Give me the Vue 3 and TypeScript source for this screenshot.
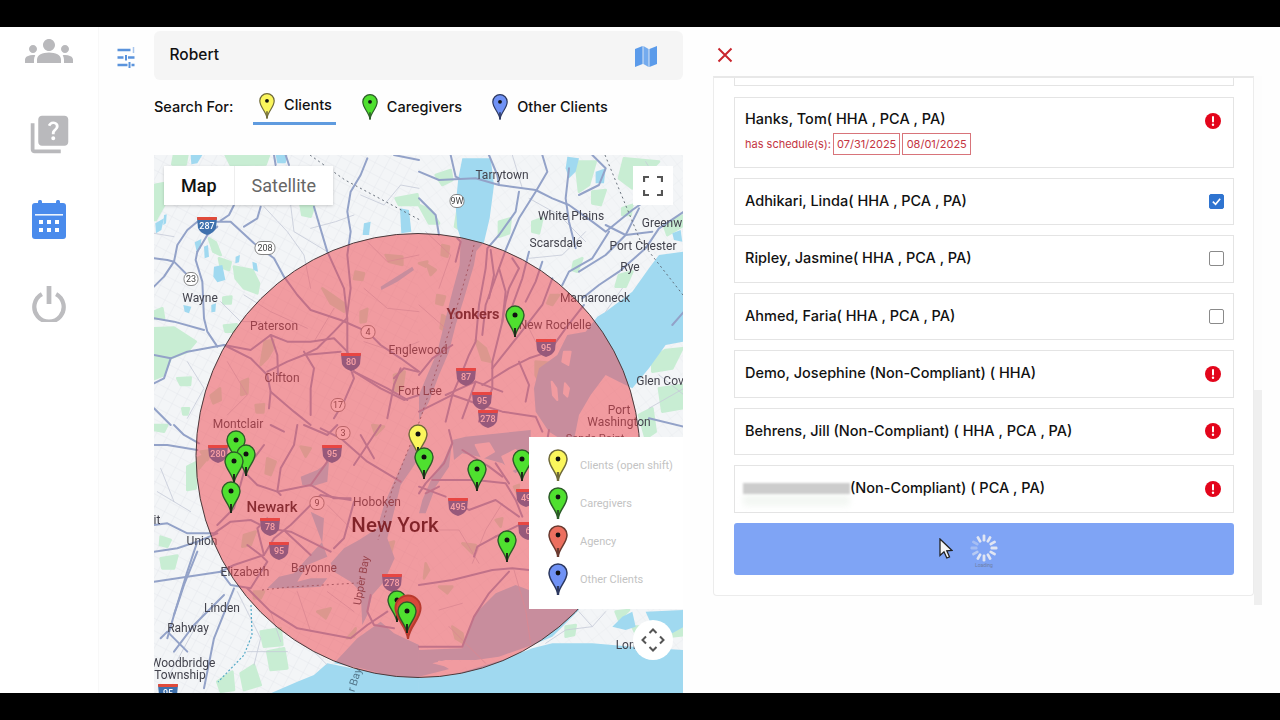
<script setup lang="ts">
interface Label { t: string; x: number; y: number; s?: number; w?: number; c?: string; r?: number }
interface Shield { t: string; x: number; y: number }
interface Pin { x: number; y: number; k: string; s?: number }
interface Quad { x: number; y: number; water: string[]; land: string[]; green: string[]; roads: string[]; thin: string[] }

const pinColors: Record<string, { f: string; s: string }> = {
  y: { f: '#fbf65c', s: '#6f6a3a' },
  g: { f: '#4fe02f', s: '#2c5c28' },
  r: { f: '#ec6f5f', s: '#6a3a30' },
  m: { f: '#d8483a', s: '#b83a2e' },
  b: { f: '#7092f5', s: '#2c3860' },
}
const pinPath = 'M0,22 C-1,13 -9,8 -9,0 A9,9 0 1 1 9,0 C9,8 1,13 0,22 Z'

const tabs = [
  { label: 'Clients', k: 'y', active: true },
  { label: 'Caregivers', k: 'g', active: false },
  { label: 'Other Clients', k: 'b', active: false },
]
const legend = [
  { label: 'Clients (open shift)', k: 'y' },
  { label: 'Caregivers', k: 'g' },
  { label: 'Agency', k: 'r' },
  { label: 'Other Clients', k: 'b' },
]
const pins: Pin[] = [
  { x: 515, y: 315, k: 'g' }, { x: 236, y: 440, k: 'g' }, { x: 246, y: 454, k: 'g' },
  { x: 234, y: 461, k: 'g' }, { x: 231, y: 491, k: 'g' }, { x: 418, y: 434, k: 'y' },
  { x: 424, y: 457, k: 'g' }, { x: 477, y: 469, k: 'g' }, { x: 522, y: 459, k: 'g' },
  { x: 507, y: 540, k: 'g' }, { x: 397, y: 600, k: 'g' }, { x: 408, y: 608, k: 'm', s: 1.4 },
  { x: 407, y: 611, k: 'g' },
]
const labels: Label[] = [
  { t: 'Tarrytown', x: 502, y: 179 }, { t: 'White Plains', x: 571, y: 220 }, { t: 'Scarsdale', x: 556, y: 247 },
  { t: 'Greenw', x: 662, y: 227 }, { t: 'Port Chester', x: 643, y: 250 }, { t: 'Rye', x: 630, y: 271 },
  { t: 'Mamaroneck', x: 595, y: 302 }, { t: 'New Rochelle', x: 555, y: 329 },
  { t: 'Yonkers', x: 473, y: 319, s: 14.5, w: 700, c: '#2a1a20' }, { t: 'Paterson', x: 274, y: 330 },
  { t: 'Wayne', x: 200, y: 302 }, { t: 'Englewood', x: 418, y: 354 }, { t: 'Clifton', x: 282, y: 382 },
  { t: 'Fort Lee', x: 420, y: 395 }, { t: 'Glen Cov', x: 660, y: 385 }, { t: 'Port', x: 619, y: 414 },
  { t: 'Washington', x: 619, y: 426 }, { t: 'Montclair', x: 238, y: 428 },
  { t: 'Newark', x: 272, y: 512, s: 15, w: 500, c: '#22161a' }, { t: 'Hoboken', x: 377, y: 506 },
  { t: 'New York', x: 395, y: 532, s: 20.5, w: 500, c: '#140408' }, { t: 'Union', x: 202, y: 545 },
  { t: 'Elizabeth', x: 245, y: 576 }, { t: 'Bayonne', x: 314, y: 572 }, { t: 'Linden', x: 222, y: 612 },
  { t: 'Rahway', x: 188, y: 632 }, { t: 'Woodbridge', x: 183, y: 667 }, { t: 'Township', x: 180, y: 679 },
  { t: 'it', x: 157, y: 524 }, { t: 'Long', x: 629, y: 649 }, { t: 'Sands Point', x: 595, y: 442, s: 11 },
]
const rotated: Label[] = [
  { t: 'Upper Bay', x: 365, y: 581, r: -80, s: 11 },
  { t: 'r Bay', x: 358, y: 681, r: -72, s: 11, c: '#55798c' },
]
const interstates: Shield[] = [
  { t: '287', x: 207, y: 225 }, { t: '280', x: 218, y: 453 }, { t: '95', x: 332, y: 453 },
  { t: '80', x: 351, y: 361 }, { t: '87', x: 466, y: 376 }, { t: '95', x: 482, y: 400 },
  { t: '278', x: 488, y: 418 }, { t: '95', x: 546, y: 347 }, { t: '495', x: 458, y: 506 },
  { t: '78', x: 270, y: 526 }, { t: '95', x: 279, y: 550 }, { t: '278', x: 392, y: 582 },
  { t: '95', x: 168, y: 692 }, { t: '49', x: 526, y: 497 }, { t: '6', x: 528, y: 530 },
]
const routes: Shield[] = [
  { t: '208', x: 265, y: 248 }, { t: '23', x: 191, y: 279 }, { t: '4', x: 368, y: 332 },
  { t: '17', x: 338, y: 405 }, { t: '3', x: 343, y: 433 }, { t: '9W', x: 457, y: 201 }, { t: '9', x: 317, y: 503 },
]
const quads: Quad[] = [
  {
    x: 154, y: 155,
    water: [
      '110,0 145,0 130,25 112,28', '365,0 400,0 395,25 370,25',
      '180,335 205,330 214,375 190,382 178,365', '150,275 162,270 165,305 152,310',
      '122,262 142,252 140,280 128,290', '4,205 30,190 22,225 6,235', '30,180 38,178 36,205 28,210',
      '245,305 258,300 255,322 244,325', '295,320 308,325 312,350 298,345', '88,450 112,455 105,475 92,470',
      '172,450 186,445 184,470 172,472', '738,160 765,165 772,230 742,235', '630,205 650,200 645,240 626,240',
      '680,395 720,370 775,335 780,345 730,380 682,405',
    ],
    land: [],
    green: [
      '0,90 28,85 30,150 5,195 0,195', '240,335 295,345 315,385 310,415 270,400 245,370', '195,310 230,322 225,345 200,335',
      '165,250 185,262 200,300 178,290', '0,520 60,518 125,560 100,590 50,610 30,660 0,672', '70,670 110,668 108,690 80,690',
      '210,512 248,508 240,530 215,530', '215,0 345,0 335,28 230,30', '725,130 790,118 795,150 735,150',
      '0,470 25,460 30,490 0,490', '208,428 232,425 230,445 208,445', '60,0 100,0 95,28 55,28', '440,150 480,155 470,185 445,180',
      '505,400 535,420 570,445 570,470 530,445', '332,560 358,555 355,585 340,610 320,630 325,600',
      '605,350 630,355 625,375 600,372', '262,680 282,672 280,715 262,720', '170,722 198,700 200,735 178,745',
      '620,470 640,462 635,500 620,502', '695,300 745,305 745,330 705,320', '720,660 752,650 745,700 722,712',
      '305,750 330,748 328,772 308,772', '85,760 105,760 100,778 88,778',
    ],
    roads: [
      'M0,395 L30,365 60,320 70,270 100,225 130,200 230,200 300,265 360,310 390,365 430,420 470,465 560,495 640,530 680,570 740,610 795,650',
      'M240,150 L225,180 200,197', 'M320,155 L310,190 270,215', 'M0,310 L40,315 60,320 110,370',
      'M130,290 L125,315 145,380 150,490 160,530 190,575', 'M0,490 L60,500 150,525', 'M130,290 L160,240 190,215',
      'M0,685 L30,670 50,610 100,590 210,570 290,585 350,540 400,560 470,560 540,550 580,590 600,650 680,700 750,735 795,720',
      'M210,570 L290,610 340,660 350,710 345,760', 'M350,540 L370,600 372,660', 'M340,650 L400,620 450,600 560,590',
      'M450,590 L480,640 470,700 470,780', 'M480,155 L520,290 570,400 580,490 580,620 590,640 600,670 570,740 540,790',
      'M640,10 L620,60 590,110 580,170 590,230 580,300 590,400 578,490 540,530 490,580 450,600',
      'M350,710 L420,770 470,810', 'M600,650 L700,700 760,735', 'M0,760 L50,810', 'M740,640 L720,690 700,790',
      'M790,650 L750,640 720,670', 'M360,0 L365,30', 'M395,0 L405,30', 'M720,0 L795,15', 'M0,600 L50,610',
    ],
    thin: [
      'M330,155 L400,230 450,300 470,400', 'M410,150 L420,230 520,290', 'M620,120 L690,150 740,90 795,100',
      'M640,260 L700,320 795,300', 'M200,440 L260,500 320,500', 'M60,120 L110,130 150,90', 'M0,235 L60,245',
      'M630,400 L700,460 795,470', 'M480,560 L540,460', 'M220,620 L280,720 220,780', 'M100,620 L150,700 100,790',
      'M630,560 L720,590 795,560', 'M470,220 L545,200 600,180', 'M270,420 L350,470 460,520',
    ],
  },
  {
    x: 419, y: 155,
    water: [
      '130,10 215,10 225,90 212,190 195,262 172,288 165,330 132,440 110,510 90,590 60,660 30,740 0,795 0,720 25,660 55,590 75,510 100,410 122,330 125,250 115,220 110,150 118,70',
      '795,290 720,300 690,340 640,410 560,470 535,485 500,530 445,540 415,600 360,640 345,700 350,770 390,830 430,855 465,855 480,780 515,720 560,660 600,680 640,700 690,640 740,570 795,560',
      '445,5 480,10 470,50 450,70 440,40', '530,50 560,40 555,85 530,85', '760,235 785,225 790,260 765,255',
    ],
    land: ['398,680 412,700 415,735 402,720', '438,685 450,700 445,725 435,715', '435,590 455,590 448,630 430,620'],
    green: [
      '50,60 95,45 100,75 70,90', '0,150 35,165 60,205 30,205', '115,170 145,190 125,225 108,215', '240,200 275,190 270,235 240,245',
      '470,20 530,20 510,90 480,110', '520,110 560,105 545,150 520,145', '615,10 720,20 640,100 600,70',
      '610,160 640,150 635,180 610,180', '735,210 795,180 795,210 745,240', '600,360 640,350 620,395 590,395',
      '465,320 490,310 475,350 460,345', '700,610 740,585 790,580 760,640 700,650', '720,700 790,690 790,760 730,770', '660,780 700,760 710,830 680,850',
      '340,200 370,190 360,235 340,230', '70,270 90,275 85,305 68,300', '25,330 50,345 35,360', '55,420 78,425 70,450 52,445',
      '70,480 85,490 85,530 65,520', '395,420 420,420 400,450 385,445', '350,620 410,625 395,680 370,700 350,660',
      '170,555 200,580 215,620 190,615', '0,325 25,320 20,335',
    ],
    roads: [
      'M0,50 L60,75 170,70 240,90 350,105 400,130 450,150 520,200 560,230 640,165 690,130', 'M95,0 L110,65 120,70', 'M0,130 L50,180 60,240',
      'M370,0 L385,50 350,110 300,190 260,285 240,340 260,410 250,500', 'M300,110 L290,170 240,240 205,280 200,340 180,450 170,560 150,600 130,650 100,720 80,800',
      'M280,310 L300,340 270,400 260,440 250,500 220,620 220,700 180,800', 'M330,290 L310,370 270,480', 'M370,320 L350,380 320,440',
      'M400,370 L370,450 300,540 260,590 220,640', 'M495,450 L440,520 390,590 330,610 270,640 190,690', 'M450,40 L440,130 450,200 470,280',
      'M570,230 L520,310 450,350 430,390', 'M795,170 L720,220 680,280 600,350 540,390 490,430', 'M660,160 L620,240 560,300 480,350', 'M560,210 L620,240 700,230',
      'M300,620 L330,690 320,740', 'M80,720 L170,680 250,710', 'M0,770 L60,740 100,720 170,745 250,770 350,785 370,830', 'M130,790 L170,680',
      'M520,0 L560,40 540,90 480,120', 'M210,0 L235,60 240,90', 'M110,320 L125,260 115,250', 'M240,340 L200,450 190,540', 'M215,285 L225,360 210,430',
      'M0,660 L40,610 100,570', 'M795,470 L760,510', 'M690,790 L795,815',
    ],
    thin: ['M280,0 L310,100', 'M330,130 L420,180 500,260', 'M500,230 L430,300 330,310', 'M560,470 L610,400', 'M680,20 L730,100', 'M720,660 L795,720', 'M690,760 L795,700', 'M20,230 L95,300 60,400', 'M0,450 L80,520', 'M300,460 L350,560'],
  },
  {
    x: 154, y: 425,
    water: [
      '770,60 795,50 795,100 740,180 720,260 700,340 722,400 690,470 655,510 640,570 625,600 620,500 590,470 540,440 530,415 570,370 615,345 670,310 690,240 720,170',
      '470,260 510,280 505,350 450,410 420,445 375,455 340,490 420,490 500,485 520,460 470,460 430,470 460,420 520,395',
      '440,155 490,135 525,110 520,170 470,185 445,180',
      '540,715 610,640 680,590 720,625 795,660 795,765 700,750 620,730', '520,715 620,735 795,762 795,805 350,805 430,770 480,750',
    ],
    land: [],
    green: [
      '100,125 130,110 125,190 100,195', '20,335 50,345 40,365 18,360', '20,400 70,392 60,430 25,430', '320,620 380,610 385,660 330,665',
      '340,680 390,670 400,730 350,735', '190,770 235,740 240,795 200,800', '260,745 300,720 320,780 270,795', '0,0 40,0 30,20 0,15',
      '130,100 165,85 160,100 135,130', '340,100 365,110 350,150 335,145', '440,65 470,70 455,95', '655,0 690,5 665,30',
      '270,330 305,320 290,360 265,365', '300,500 330,500 320,520 300,520', '490,560 530,550 515,580', '580,640 605,610 600,635', '680,360 720,350 710,385 680,385',
      '140,80 175,75 160,105',
    ],
    roads: [
      'M60,0 L90,30 135,55', 'M0,60 L40,60 130,75', 'M0,300 L40,295 100,325 180,325 230,290 290,285 340,310 410,320 530,380', 'M0,380 L70,370 130,350 190,325',
      'M0,470 L100,455 200,440', 'M200,440 L240,420 330,390 360,340 410,300 500,210 590,225', 'M130,350 L100,440 60,570 40,640', 'M130,380 L90,480 60,570',
      'M20,640 L40,620 100,680', 'M240,490 L180,640 150,790', 'M280,490 L350,560 430,610 590,640 640,600 700,560', 'M270,140 L310,180 370,200 470,180 540,220 590,220',
      'M350,0 L390,20', 'M430,0 L420,60 380,130 370,200 380,210', 'M510,70 L520,110 470,180', 'M500,10 L560,40 640,110 740,170', 'M620,30 L660,100',
      'M680,0 L640,60 600,120', 'M600,230 L570,340 540,370', 'M650,510 L640,560 660,600 720,610', 'M280,360 L320,390 340,410 290,490 230,480 200,440',
      'M330,390 L320,350 310,310 340,280', 'M190,300 L240,250 270,140 330,60', 'M450,0 L520,30 550,0', 'M210,510 L120,600 60,680', 'M395,320 L470,390',
    ],
    thin: ['M250,500 L320,640 300,720', 'M420,640 L480,680 520,720', 'M350,560 L380,650', 'M150,560 L40,760', 'M20,130 L60,230', 'M10,200 L110,260', 'M430,500 L470,620', 'M520,500 L600,560', 'M280,680 L400,680', 'M520,240 L600,320'],
  },
  {
    x: 419, y: 430,
    water: [
      '100,30 140,20 335,0 335,90 290,130 250,100 180,80 130,70 105,90',
      '100,30 75,90 40,140 10,210 0,250 20,250 50,170 90,110',
      '0,660 130,655 170,550 230,490 290,465 330,480 470,495 480,540 400,620 340,645 240,680 170,690 80,690 40,700 100,715 0,740',
      '0,745 100,735 250,690 340,655 400,640 520,640 640,650 795,660 795,790 0,790',
      '580,590 610,560 640,545 650,590 620,600', '680,545 795,540 795,590 760,610 700,590',
    ],
    land: ['170,45 210,40 225,65 190,85', '250,80 290,60 300,110 270,125', '60,695 130,700 170,700 100,720'],
    green: [
      '200,535 235,530 225,565 205,565', '280,575 300,570 295,595 280,595', '160,600 200,600 205,670 170,660', '100,590 130,610 135,640 110,625', '240,600 265,605 255,620',
      '380,555 418,550 405,580 385,585', '20,400 30,420 15,445', '130,340 170,345 160,370', '230,270 250,265 245,290', '285,170 300,165 295,190', '60,470 100,470 85,490',
      '70,770 130,745 100,760', '440,590 470,585 465,615 440,620', '640,590 690,590 690,610 650,610', '590,545 630,540 600,570', '735,600 795,595 795,615 750,620',
      '310,200 330,195 325,220',
    ],
    roads: [
      'M165,380 L175,350 230,320', 'M0,465 L100,450 220,420 280,415 330,420', 'M0,650 L130,650 165,560 210,490 270,425', 'M90,0 L100,40 75,100 20,160 0,190',
      'M40,150 L170,150 260,160 290,210 310,260', 'M100,210 L150,240 230,210 300,260', 'M230,100 L270,160', 'M130,60 L210,110 250,140', 'M0,170 L80,200', 'M20,190 L60,170',
      'M390,0 L385,30', 'M230,320 L310,280',
    ],
    thin: ['M285,420 L320,540 335,640', 'M20,300 L120,300 180,400', 'M250,220 L200,300 160,400', 'M380,640 L440,600 520,590 560,545', 'M480,545 L520,590', 'M60,540 L130,520', 'M90,590 L200,700'],
  },
]
const ticks = Array.from({ length: 12 }, (_, i) => ({
  a: i * 30,
  o: i === 9 || i === 10 ? 0.35 : i === 8 ? 0.5 : 0.85,
}))
const rows = [
  { name: 'Adhikari, Linda( HHA , PCA , PA)', state: 'checked' },
  { name: 'Ripley, Jasmine( HHA , PCA , PA)', state: 'empty' },
  { name: 'Ahmed, Faria( HHA , PCA , PA)', state: 'empty' },
  { name: 'Demo, Josephine (Non-Compliant) ( HHA)', state: 'error' },
  { name: 'Behrens, Jill (Non-Compliant) ( HHA , PCA , PA)', state: 'error' },
]
</script>

<template>
  <div class="screen">
    <div class="bar"></div>
    <div class="content">
      <nav class="rail">
        <svg class="r-people" viewBox="0 0 24 24" width="48" height="48"><path fill="#b9b9bc" d="M12 12.75c1.63 0 3.07.39 4.24.9 1.08.48 1.76 1.56 1.76 2.73V18H6v-1.61c0-1.18.68-2.26 1.76-2.73 1.17-.52 2.61-.91 4.24-.91zM4 13c1.1 0 2-.9 2-2s-.9-2-2-2-2 .9-2 2 .9 2 2 2zm1.13 1.1C4.76 14.04 4.39 14 4 14c-.99 0-1.93.21-2.78.58C.48 14.9 0 15.62 0 16.43V18h4.5v-1.61c0-.83.23-1.61.63-2.29zM20 13c1.1 0 2-.9 2-2s-.9-2-2-2-2 .9-2 2 .9 2 2 2zm4 3.43c0-.81-.48-1.53-1.22-1.85C21.93 14.21 20.99 14 20 14c-.39 0-.76.04-1.13.1.4.68.63 1.46.63 2.29V18H24v-1.57zM12 6c1.66 0 3 1.34 3 3s-1.34 3-3 3-3-1.34-3-3 1.34-3 3-3z"/></svg>
        <svg class="r-quiz" viewBox="0 0 24 24" width="45" height="45"><path fill="#b9b9bc" d="M4 6H2v14c0 1.1.9 2 2 2h14v-2H4V6zm16-4H8c-1.1 0-2 .9-2 2v12c0 1.1.9 2 2 2h12c1.1 0 2-.9 2-2V4c0-1.1-.9-2-2-2zm-5.99 13c-.59 0-1.05-.47-1.05-1.05 0-.59.47-1.04 1.05-1.04.59 0 1.04.45 1.04 1.04-.01.58-.45 1.05-1.04 1.05zm2.5-6.17c-.63.93-1.23 1.21-1.56 1.81-.13.24-.18.4-.18 1.18h-1.52c0-.41-.06-1.08.26-1.65.41-.73 1.18-1.16 1.63-1.8.48-.68.21-1.94-1.14-1.94-.88 0-1.32.67-1.5 1.23l-1.37-.57C11.51 5.96 12.52 5 13.99 5c1.23 0 2.08.56 2.51 1.26.37.61.58 1.73.01 2.57z"/></svg>
        <svg class="r-cal" viewBox="0 0 36 40" width="36" height="40">
          <rect x="1" y="3" width="34" height="36" rx="3" fill="#4a8bec"/>
          <rect x="7" y="0" width="4" height="7" rx="1.5" fill="#4a8bec"/>
          <rect x="25" y="0" width="4" height="7" rx="1.5" fill="#4a8bec"/>
          <rect x="4" y="14" width="28" height="1.6" fill="#fff" opacity=".9"/>
          <g fill="#fff">
            <rect x="8" y="20" width="4" height="4"/><rect x="16" y="20" width="4" height="4"/><rect x="24" y="20" width="4" height="4"/>
            <rect x="8" y="28" width="4" height="4"/><rect x="16" y="28" width="4" height="4"/><rect x="24" y="28" width="4" height="4"/>
          </g>
        </svg>
        <svg class="r-power" viewBox="0 0 38 38" width="36" height="36">
          <path d="M11.5 8.5 A15.5 15.5 0 1 0 26.5 8.5" fill="none" stroke="#bcbcbf" stroke-width="4.5"/>
          <rect x="16.5" y="0" width="5" height="19" fill="#bcbcbf"/>
        </svg>
      </nav>

      <div class="filter-col">
        <svg viewBox="0 0 18 22" width="18" height="22">
          <g stroke="#5a93dc" stroke-width="2.4" fill="none">
            <path d="M.5 3H13.5M.5 10.5H6.5M11 10.5H17.5M.5 18H10.5M14.5 18H17.5"/>
            <path d="M9 8V13.5M12.5 15V21" stroke-width="2"/>
            <path d="M16.5 0V6" stroke-width="1.5" stroke="#a9c6ec"/>
          </g>
        </svg>
      </div>

      <main class="left">
        <div class="search">
          <span class="search-text">Robert</span>
          <svg viewBox="0 0 24 24" width="24" height="24">
            <path fill="#5b9bea" d="M1 5 L8.6 2 V20 L1 23Z M15.4 5 L23 2 V20 L15.4 23 Z"/>
            <path fill="#74abee" d="M9.4 2 L14.6 5 V23 L9.4 20 Z"/>
          </svg>
        </div>

        <div class="tabs">
          <span class="search-for">Search For:</span>
          <div v-for="tab in tabs" :key="tab.label" class="tab" :class="{ active: tab.active }">
            <svg viewBox="-11 -11 22 35" width="18" height="28">
              <path :d="pinPath" :fill="pinColors[tab.k].f" :stroke="pinColors[tab.k].s" stroke-width="1.5"/>
              <path d="M0,13V22" :stroke="pinColors[tab.k].s" stroke-width="2"/>
              <circle r="2.4" fill="#111"/>
            </svg>
            <span class="tab-label">{{ tab.label }}</span>
          </div>
        </div>

        <div class="map">
          <svg class="map-svg" viewBox="154 155 529 538" width="529" height="538">
            <defs>
              <pattern id="streets" width="11" height="11" patternUnits="userSpaceOnUse" patternTransform="rotate(28)">
                <path d="M0 0H11M0 0V11" stroke="#e0e3e7" stroke-width=".7" fill="none"/>
              </pattern>
              <pattern id="streets2" width="9" height="14" patternUnits="userSpaceOnUse" patternTransform="rotate(-38)">
                <path d="M0 0H9M0 0V14" stroke="#e3e5e9" stroke-width=".6" fill="none"/>
              </pattern>
            </defs>
            <rect x="154" y="155" width="529" height="538" fill="#f3f5f7"/>
            <rect x="154" y="155" width="264" height="538" fill="url(#streets)"/>
            <rect x="418" y="155" width="265" height="538" fill="url(#streets2)"/>
            <g v-for="q in quads" :key="'a' + q.x + q.y" :transform="`translate(${q.x} ${q.y}) scale(.3333)`">
              <polygon v-for="(p, i) in q.green" :key="'g' + i" :points="p" fill="#c8edd3" stroke="#c8edd3" stroke-width="8" stroke-linejoin="round"/>
              <polygon v-for="(p, i) in q.water" :key="'w' + i" :points="p" fill="#a0d9f0"/>
              <polygon v-for="(p, i) in q.land" :key="'l' + i" :points="p" fill="#f3f5f7" stroke="#f3f5f7" stroke-width="6" stroke-linejoin="round"/>
            </g>
            <g v-for="q in quads" :key="'b' + q.x + q.y" :transform="`translate(${q.x} ${q.y}) scale(.3333)`" fill="none" stroke-linejoin="round" stroke-linecap="round">
              <path v-for="(d, i) in q.thin" :key="'t' + i" :d="d" stroke="#c6cbd8" stroke-width="2.5"/>
              <path v-for="(d, i) in q.roads" :key="'r' + i" :d="d" stroke="#93a2c8" stroke-width="6"/>
            </g>
            <path d="M310,155 L345,180 L420,220 M474,245 L470,262 L456,310 L420,420 L392,490 L378,540 M605,155 L640,240 L683,295 M262,590 L290,587 L358,583" fill="none" stroke="#59626e" stroke-width=".9" stroke-dasharray="2 3"/>
            <path d="M251,605 L252,635 L244,655 L218,682" fill="none" stroke="#55aac8" stroke-width="1.2" stroke-dasharray="2 2"/>
            <g>
              <g v-for="s in interstates" :key="s.t + s.x" :transform="`translate(${s.x} ${s.y})`">
                <path d="M-10,-7 H10 L9,3 Q7,8 0,10 Q-7,8 -9,3 Z" fill="#3f71ad"/>
                <path d="M-10,-8 H10 L9.6,-5 H-9.6 Z" fill="#e04a3a"/>
                <text y="4" text-anchor="middle" fill="#fff" font-size="9" font-weight="500">{{ s.t }}</text>
              </g>
              <g v-for="s in routes" :key="s.t + s.x" :transform="`translate(${s.x} ${s.y})`">
                <rect :x="s.t.length > 2 ? -10 : -7" y="-6.5" :width="s.t.length > 2 ? 20 : 14" height="13" rx="6" fill="#fff" stroke="#777" stroke-width=".9"/>
                <text y="3.2" text-anchor="middle" fill="#444" font-size="9">{{ s.t }}</text>
              </g>
            </g>
            <text v-for="l in labels" :key="l.t" :x="l.x" :y="l.y" text-anchor="middle"
              :font-size="l.s || 12" :font-weight="l.w || 400" :fill="l.c || '#43434d'">{{ l.t }}</text>
            <text v-for="l in rotated" :key="l.t" text-anchor="middle" :transform="`translate(${l.x} ${l.y}) rotate(${l.r})`"
              :font-size="l.s" :fill="l.c || '#43434d'">{{ l.t }}</text>
            <circle cx="418" cy="455.5" r="222" fill="#f0424a" fill-opacity=".5" stroke="#4a3a3c" stroke-width="1"/>
            <g v-for="(p, i) in pins" :key="'p' + i" :transform="`translate(${p.x} ${p.y}) scale(${p.s || 1})`">
              <path :d="pinPath" :fill="pinColors[p.k].f" :stroke="pinColors[p.k].s" stroke-width="1.4"/>
              <path v-if="p.k !== 'm'" d="M0,13V22" stroke="#1c2a18" stroke-width="2"/>
              <circle r="2.5" fill="#111"/>
            </g>
          </svg>

          <div class="map-type">
            <span class="mt-map">Map</span>
            <span class="mt-sat">Satellite</span>
          </div>
          <div class="fullscreen">
            <svg viewBox="0 0 20 20" width="20" height="20">
              <path d="M1 6V1H6M14 1H19V6M19 14V19H14M6 19H1V14" fill="none" stroke="#555" stroke-width="2.2"/>
            </svg>
          </div>
          <div class="pan">
            <svg viewBox="0 0 24 24" width="24" height="24">
              <path d="M8.5 5 L12 1.5 L15.5 5M8.5 19 L12 22.5 L15.5 19M5 8.5 L1.5 12 L5 15.5M19 8.5 L22.5 12 L19 15.5" fill="none" stroke="#555" stroke-width="2"/>
            </svg>
          </div>
          <div class="legend">
            <div v-for="item in legend" :key="item.label" class="legend-row">
              <svg viewBox="-11 -11 22 35" width="22" height="35">
                <path :d="pinPath" :fill="pinColors[item.k].f" :stroke="pinColors[item.k].s" stroke-width="1.5"/>
                <path d="M0,13V22" :stroke="pinColors[item.k].s" stroke-width="2.4"/>
                <circle r="2.4" fill="#111"/>
              </svg>
              <span>{{ item.label }}</span>
            </div>
          </div>
        </div>
      </main>

      <aside class="right">
        <div class="close-row">
          <svg viewBox="0 0 16 16" width="16" height="16">
            <path d="M1.5 1.5 L14.5 14.5 M14.5 1.5 L1.5 14.5" stroke="#c9252d" stroke-width="2" fill="none"/>
          </svg>
        </div>
        <div class="panel-wrap">
          <section class="panel">
            <div class="row cut"></div>
            <div class="row tall">
              <div>
                <div class="name">Hanks, Tom( HHA , PCA , PA)</div>
                <div class="sched">
                  <span>has schedule(s):</span>
                  <span class="date">07/31/2025</span>
                  <span class="date">08/01/2025</span>
                </div>
              </div>
              <svg class="err tall-err" viewBox="0 0 16 16" width="16" height="16">
                <circle cx="8" cy="8" r="8" fill="#e3051b"/>
                <rect x="7" y="3" width="2" height="6.5" rx="1" fill="#fff"/>
                <circle cx="8" cy="11.8" r="1.2" fill="#fff"/>
              </svg>
            </div>
            <div v-for="r in rows" :key="r.name" class="row">
              <span class="name">{{ r.name }}</span>
              <span v-if="r.state === 'checked'" class="box checked">
                <svg viewBox="0 0 12 12" width="11" height="11"><path d="M2 6.2 L5 9 L10 3" fill="none" stroke="#fff" stroke-width="1.8"/></svg>
              </span>
              <span v-else-if="r.state === 'empty'" class="box"></span>
              <svg v-else class="err" viewBox="0 0 16 16" width="16" height="16">
                <circle cx="8" cy="8" r="8" fill="#e3051b"/>
                <rect x="7" y="3" width="2" height="6.5" rx="1" fill="#fff"/>
                <circle cx="8" cy="11.8" r="1.2" fill="#fff"/>
              </svg>
            </div>
            <div class="row blurred">
              <span class="name name-blur"><i class="smudge"></i>(Non-Compliant) ( PCA , PA)</span>
              <svg class="err" viewBox="0 0 16 16" width="16" height="16">
                <circle cx="8" cy="8" r="8" fill="#e3051b"/>
                <rect x="7" y="3" width="2" height="6.5" rx="1" fill="#fff"/>
                <circle cx="8" cy="11.8" r="1.2" fill="#fff"/>
              </svg>
            </div>
            <button class="submit" type="button">
              <span class="spinner">
                <svg viewBox="-14 -14 28 28" width="28" height="28">
                  <rect v-for="t in ticks" :key="t.a" x="-1.4" y="-13.5" width="2.8" height="7" rx="1.2" fill="#f2f2f2"
                    :fill-opacity="t.o" :transform="`rotate(${t.a})`"/>
                </svg>
                <span class="loading">Loading</span>
              </span>
              <svg class="cursor" viewBox="0 0 14 22" width="14" height="22">
                <path d="M1 1 V17.5 L5 13.8 L7.8 20 L10.5 18.8 L7.8 12.8 L13 12.5 Z" fill="#f6f6f6" stroke="#222" stroke-width="1.3"/>
              </svg>
            </button>
          </section>
          <div class="scroll"><div class="thumb"></div></div>
        </div>
      </aside>
    </div>
    <div class="bar"></div>
  </div>
</template>

<style>
html, body { margin: 0; background: #000; }
</style>

<style scoped>
.screen {
  width: 1280px; height: 720px; display: flex; flex-direction: column; overflow: hidden;
  background: #000; font-family: Inter, "Liberation Sans", sans-serif; color: #111;
}
.bar { height: 27px; flex: none; background: #000; }
.content { height: 666px; flex: none; display: flex; background: #fefefe; overflow: hidden; }

.rail {
  width: 98px; flex: none; background: #fff; border-right: 1px solid #f8f8f8;
  display: flex; flex-direction: column; align-items: center;
}
.r-people { margin-top: 0; }
.r-quiz { margin-top: 37px; }
.r-cal { margin-top: 43px; }
.r-power { margin-top: 46px; }

.filter-col { width: 55px; flex: none; padding: 20px 0 0 18px; box-sizing: border-box; }

.left { width: 529px; flex: none; display: flex; flex-direction: column; }
.search {
  margin-top: 4px; height: 49px; flex: none; box-sizing: border-box; padding: 0 25px 0 15.5px;
  display: flex; align-items: center; justify-content: space-between;
  background: #f5f5f5; border-radius: 6px;
}
.search-text { font-size: 15.5px; font-weight: 500; margin-top: -2px; }
.tabs { height: 33px; margin-top: 12px; flex: none; display: flex; align-items: flex-start; }
.search-for { width: 99px; flex: none; font-size: 14.5px; font-weight: 500; line-height: 30px; }
.tab {
  display: flex; align-items: center; gap: 8px; height: 33px; box-sizing: border-box;
  padding: 0 4px 4px 5px; margin-right: 20px; font-size: 14.5px; font-weight: 500;
}
.tab.active { border-bottom: 3px solid #5f9bdf; padding-bottom: 3px; }
.tab.active .tab-label { margin-top: -2px; }

.map { position: relative; margin-top: 30px; width: 529px; height: 538px; flex: none; overflow: hidden; font-family: Roboto, sans-serif; }
.map-svg { display: block; font-family: Roboto, sans-serif; filter: blur(.35px); }
.map-type {
  position: absolute; left: 10px; top: 11px; height: 39px; display: flex; align-items: center;
  background: #fff; box-shadow: 0 1px 3px rgba(0,0,0,.18); font-size: 18px;
}
.mt-map { padding: 0 17px; font-weight: 500; color: #111; line-height: 39px; border-right: 1px solid #eee; }
.mt-sat { padding: 0 17px; color: #666; line-height: 39px; }
.fullscreen {
  position: absolute; right: 10px; top: 11px; width: 40px; height: 39px; background: #fff;
  display: flex; align-items: center; justify-content: center;
}
.pan {
  position: absolute; right: 10px; top: 465px; width: 40px; height: 40px; border-radius: 50%; background: #fff;
  display: flex; align-items: center; justify-content: center;
}
.legend {
  position: absolute; left: 375px; top: 282px; width: 154px; height: 172px; box-sizing: border-box;
  background: #fff; padding: 11px 0 0 18px; display: flex; flex-direction: column; gap: 3px;
  font-size: 11px; color: #c3c3c3;
}
.legend-row { display: flex; align-items: center; gap: 11px; height: 35px; }

.right { margin-left: 30px; flex: none; width: 549px; display: flex; flex-direction: column; }
.close-row { height: 49px; flex: none; box-sizing: border-box; padding: 20px 0 0 4px; }
.panel-wrap { display: flex; align-items: flex-start; }
.panel {
  width: 541px; box-sizing: border-box; padding: 0 19px 20px 20px; background: #fff;
  border: 1px solid #ececec; border-top: 2px solid #e8e8e8; border-radius: 0 0 4px 4px;
  display: flex; flex-direction: column; gap: 10px;
}
.row {
  height: 47.5px; flex: none; box-sizing: border-box; border: 1.5px solid #e4e4e4; padding: 0 12px 0 10px;
  display: flex; align-items: center; justify-content: space-between; background: #fff;
}
.row.cut { height: 8px; border-top: 0; margin-bottom: 1px; }
.row.tall { height: 70.5px; align-items: flex-start; padding-top: 13px; }
.name { font-size: 14.5px; font-weight: 500; line-height: 18px; color: #111; white-space: nowrap; margin-top: -1px; }
.sched { display: flex; align-items: center; gap: 2px; margin-top: 5px; font-size: 11px; color: #c43442; }
.date { border: 1px solid #d8747a; padding: 2px 3.2px; line-height: 16px; }
.err { flex: none; }
.tall-err { margin-top: 2px; }
.box {
  width: 13px; height: 13px; flex: none; margin-right: -3px; border: 1px solid #8a8a8a; border-radius: 2px; background: #fff;
  display: flex; align-items: center; justify-content: center;
}
.box.checked { background: #2f74d0; border-color: #2f74d0; }
.name-blur { display: flex; align-items: center; margin-left: -2px; }
.smudge { display: block; width: 107px; height: 11px; background: #cccccc; filter: blur(1px); box-shadow: 0 12px 6px #f3f7f3; }
.submit {
  position: relative; height: 52px; border: 0; border-radius: 3px; background: #7fa4f5; padding: 0;
  display: flex; align-items: center; justify-content: center; flex: none;
}
.spinner { display: flex; flex-direction: column; align-items: center; font-family: Roboto, sans-serif; margin-top: 5px; }
.loading { font-size: 5px; color: #6f7fa5; line-height: 7px; margin-top: 0; }
.cursor { position: absolute; left: 205px; top: 15px; }
.scroll { width: 8px; height: 529px; background: #fdfdfd; flex: none; }
.thumb { margin-top: 314px; height: 215px; background: #efefef; }
</style>
